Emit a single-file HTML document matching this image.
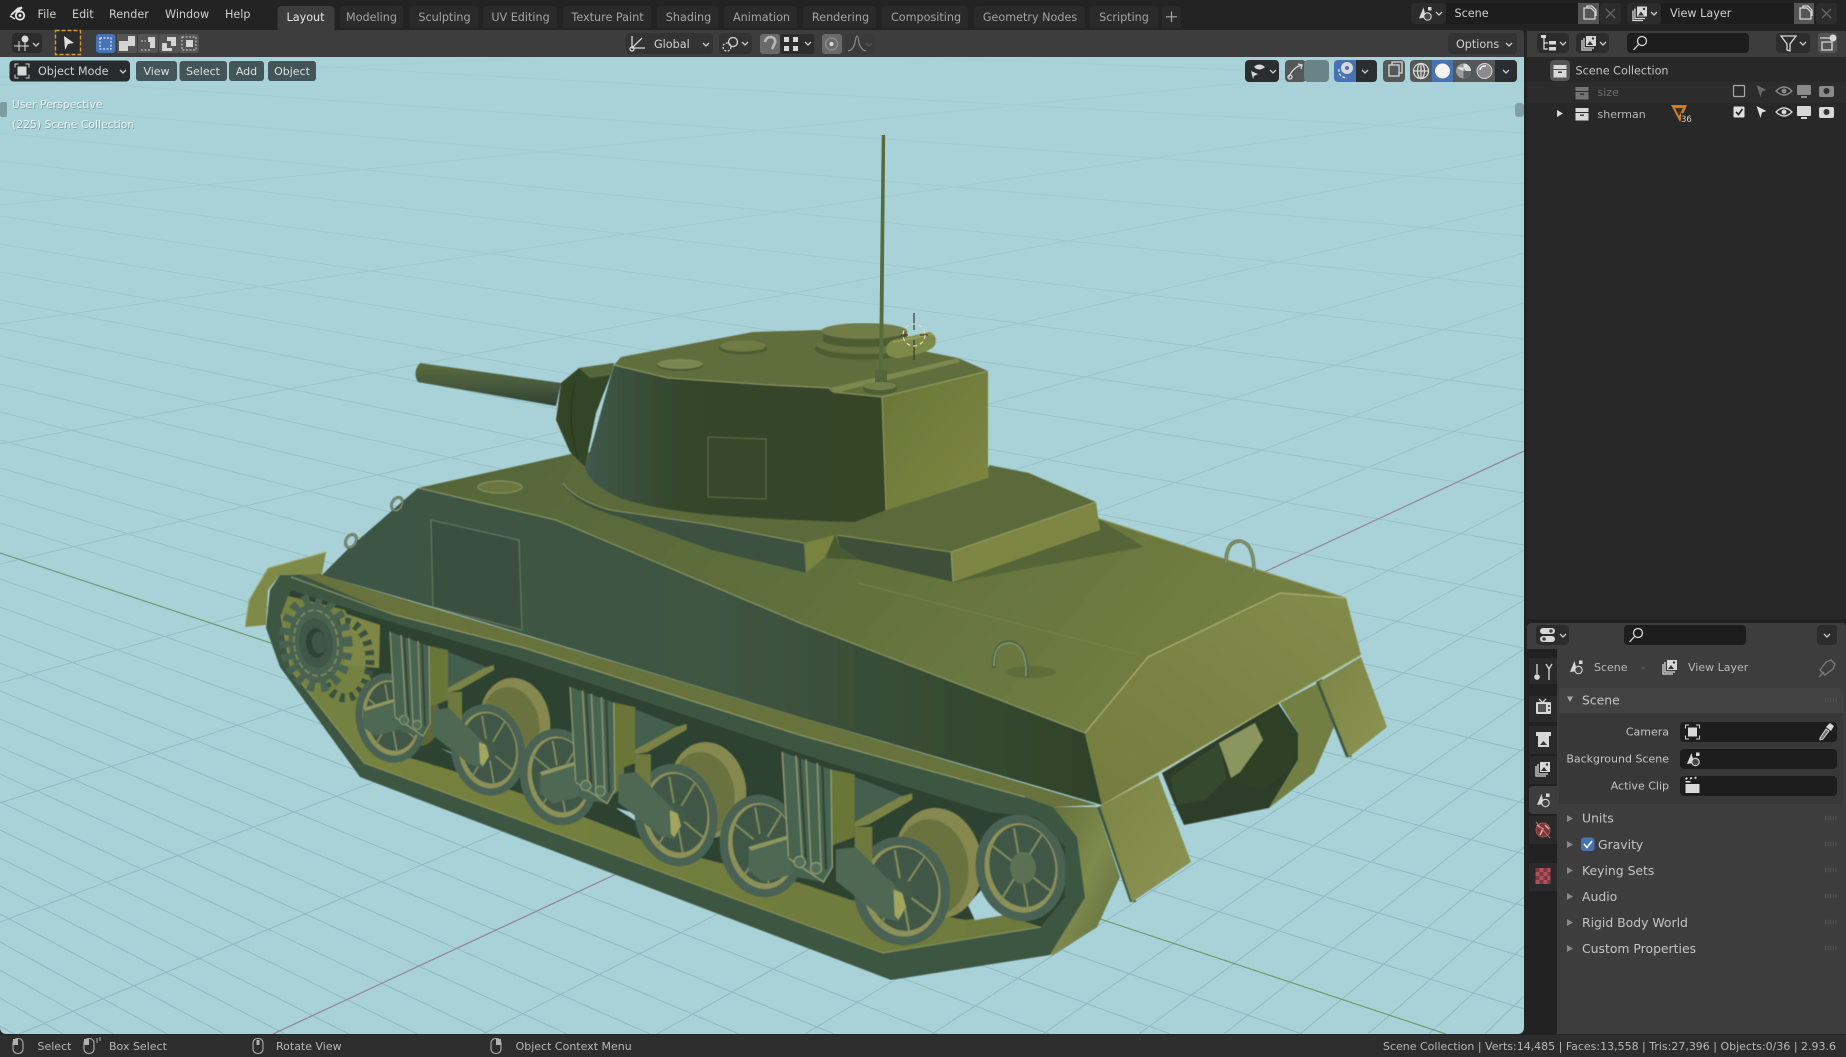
<!DOCTYPE html>
<html><head><meta charset="utf-8"><title>Blender</title>
<style>
html,body{margin:0;padding:0;background:#232323;overflow:hidden;width:1846px;height:1057px}
svg{display:block}
text{font-family:"DejaVu Sans","Liberation Sans",sans-serif;font-size:11px;fill:#b8b8b8}
.m{fill:#d0d0d0;font-size:11.2px}
.t{fill:#a3a3a3;font-size:11.2px;text-anchor:middle}
.h{fill:#c4c4c4;font-size:12.4px}
.l{fill:#c4c4c4;font-size:11px;text-anchor:end}
.b{fill:#d8e0e0;font-size:11px;text-anchor:middle}
.o{fill:#eaf3f3;font-size:10.8px}
.os{fill:#7f9fa4;font-size:10.8px}
.ic{fill:none;stroke:#d8d8d8;stroke-width:1.3}
.f{fill:#d8d8d8}
.ch{fill:none;stroke:#cfcfcf;stroke-width:1.3}
.tl{fill:none;stroke:#aeb47a;stroke-width:1;opacity:.6}
</style></head><body>
<svg width="1846" height="1057" viewBox="0 0 1846 1057" xmlns="http://www.w3.org/2000/svg">
<defs>
<filter id="soft" x="0" y="0" width="1" height="1"><feGaussianBlur stdDeviation=".55"/></filter>
<linearGradient id="gridc" gradientUnits="userSpaceOnUse" x1="0" y1="60" x2="0" y2="800"><stop offset="0" stop-color="#a5ced4"/><stop offset=".4" stop-color="#9bc5cb"/><stop offset="1" stop-color="#8fbac1"/></linearGradient>
<linearGradient id="side" x1="0" y1="0" x2="1" y2="0"><stop offset="0" stop-color="#3d5444"/><stop offset=".5" stop-color="#3f5543"/><stop offset=".85" stop-color="#35492f"/><stop offset="1" stop-color="#2f4229"/></linearGradient>
<linearGradient id="deck" x1="0" y1="0" x2="1" y2=".25"><stop offset="0" stop-color="#546539"/><stop offset=".45" stop-color="#5f6e3c"/><stop offset="1" stop-color="#737f43"/></linearGradient>
<linearGradient id="tur" x1="0" y1="0" x2="1" y2="0"><stop offset="0" stop-color="#40594f"/><stop offset=".1" stop-color="#3c5240"/><stop offset=".32" stop-color="#35462b"/><stop offset="1" stop-color="#344428"/></linearGradient>
<linearGradient id="box" x1="0" y1="0" x2="1" y2="1"><stop offset="0" stop-color="#6a7538"/><stop offset="1" stop-color="#7e8842"/></linearGradient>
<linearGradient id="rear" x1="0" y1="1" x2="1" y2="0"><stop offset="0" stop-color="#747d3f"/><stop offset=".5" stop-color="#7b8445"/><stop offset="1" stop-color="#838c4a"/></linearGradient>
<linearGradient id="fen" x1="0" y1="0" x2="1" y2="1"><stop offset="0" stop-color="#7c8545"/><stop offset="1" stop-color="#8c9454"/></linearGradient>
<linearGradient id="gun" x1="0" y1="0" x2="0" y2="1"><stop offset="0" stop-color="#5b6b3f"/><stop offset=".5" stop-color="#475a3e"/><stop offset="1" stop-color="#2f4030"/></linearGradient>
<linearGradient id="tread" x1="0" y1="0" x2="1" y2="1"><stop offset="0" stop-color="#65703a"/><stop offset=".5" stop-color="#7f8a4d"/><stop offset="1" stop-color="#5a6a3e"/></linearGradient>
<linearGradient id="strip" x1="0" y1="0" x2="1" y2="0"><stop offset="0" stop-color="#76823f"/><stop offset="1" stop-color="#6e7a3d"/></linearGradient>

<g id="w"><ellipse rx="40" ry="50" fill="#4a6252"/><ellipse rx="32" ry="42" fill="#8d9158"/><ellipse cx="1.500" cy="-1.500" rx="29" ry="38.500" fill="#3f5747"/>
<g stroke="#7f8b5c" stroke-width="1.800"><path d="M0-38V38M-24-28L24 28M-24 28L24-28"/></g><ellipse rx="9" ry="12" fill="#435a46"/></g>
<g id="bw"><ellipse rx="38" ry="48" fill="#85884f"/><ellipse cx="-6" cy="3" rx="32" ry="42" fill="#6a7340"/></g>
<g id="br">
<path d="M40 14L59 18V68L40 75Z" fill="#6b7539"/>
<path d="M59 20L105 38L70 58L59 60Z" fill="#455e50"/><path d="M59 60L70 58L105 38L105 33L95 36L59 56Z" fill="#7a8344"/>
<path d="M59 60H73V100H59Z" fill="#6e7a3e"/>
<path d="M44 78L60 76L97 113L100 124L94 136L80 132L44 103Z" fill="#4f6852"/><path d="M90 110L97 113L100 124L94 134L91 131Z" fill="#a0a660"/>
<path d="M-26 76L8 66L16 96L-14 104L-26 95Z" fill="#4e6752"/><path d="M-26 76L8 66L8 69L-24 79Z" fill="#8f9660"/>
<path d="M1 0L40 14L41 92L34 104L12 100L6 84Z" fill="#4a6351"/>
<g stroke="#8c9a72" stroke-width="1.100" fill="none"><path d="M1 0L6 84"/><path d="M12 3L17 87"/><path d="M20 6L24 90"/><path d="M29 9L32 93"/><path d="M40 14L41 92"/><path d="M6 85L34 104L41 92"/></g>
<g stroke="#2f4434" stroke-width="1.800" fill="none"><path d="M15 3L20 87"/><path d="M33 10L36 94"/></g>
<circle cx="15" cy="88" r="4.500" fill="#54705a" stroke="#8c9a72"/><circle cx="28" cy="93" r="4.500" fill="#54705a" stroke="#8c9a72"/>
</g>

<g id="ibox"><rect x="-6.500" y="-6" width="13" height="4" class="f"/><rect x="-6.500" y="-1" width="13" height="7.500" class="f"/><rect x="-2" y="0.500" width="4" height="1.400" fill="#333"/></g>
<g id="isc"><path d="M-6 5L-1.500-6L1 4Z" class="f"/><circle cx="2.500" cy="3" r="3.700" fill="#444" stroke="#d8d8d8" stroke-width="1.100"/><rect x="3" y="-6.500" width="3.500" height="3.500" class="f"/></g>
<g id="ivl"><path d="M-7-3V7H3" class="ic" fill="none"/><path d="M-5-5V5H5" class="ic" fill="none"/><rect x="-3" y="-7" width="10" height="10" class="f"/><path d="M-2 2L1-2L4 2Z" fill="#333"/><circle cx="4" cy="-4.500" r="1.200" fill="#333"/></g>
<g id="iobj"><rect x="-4.500" y="-4.500" width="9" height="9" class="f"/><path d="M-7-3.500V-7H-3.500M3.500-7H7V-3.500M7 3.500V7H3.500M-3.500 7H-7V3.500" fill="none" stroke="#cfcfcf" stroke-width="1"/></g>
<g id="im"><rect x="-5" y="-7.500" width="10" height="15" rx="4.500" fill="none" stroke="#b0b0b0" stroke-width="1.100"/></g>
<path id="arrow" d="M-4.500-6L5.500-1L1 .5L-.5 6Z"/>
<clipPath id="vp"><path d="M0 57H1524V1028a6 6 0 0 1-6 6H6a6 6 0 0 1-6-6Z"/></clipPath>
</defs>

<!-- base -->
<rect width="1846" height="1057" fill="#232323"/>

<!-- viewport -->
<g clip-path="url(#vp)">
<rect x="0" y="57" width="1524" height="977" fill="#a9d2d8"/>
<g stroke="url(#gridc)" stroke-width="1" fill="none">
<path d="M909 57L1524 81M145 57L1524 133M0 77L1524 184M0 105L1524 236M0 133L1524 287M0 161L1524 339M0 189L1524 390M0 216L1524 442M0 244L1524 493M0 272L1524 545M0 300L1524 597M0 328L1524 648M0 356L1524 700M0 384L1524 751M0 412L1524 803M0 440L1524 854M0 468L1524 906M0 495L1524 957M0 523L1524 1009M0 579L1302 1034M0 607L1170 1034M0 635L1049 1034M0 663L937 1034M0 691L834 1034M0 719L739 1034M0 747L650 1034M0 774L567 1034M0 802L489 1034M0 830L417 1034M0 858L349 1034M0 886L285 1034M0 914L224 1034M0 942L167 1034M0 970L113 1034M0 998L63 1034M0 1026L14 1034"/>
<path d="M542 57L0 85M1508 57L0 205M1524 105L0 324M1524 154L0 444M1524 204L0 564M1524 253L0 683M1524 303L0 803M1524 352L0 922M1524 402L19 1034M1524 501L483 1034M1524 550L657 1034M1524 600L805 1034M1524 649L932 1034M1524 699L1043 1034M1524 748L1139 1034M1524 798L1224 1034M1524 847L1300 1034M1524 897L1368 1034M1524 946L1429 1034M1524 996L1485 1034"/>
</g>
<path d="M273 1034L1524 451" stroke="#97899c" stroke-width="1.300" fill="none"/>
<path d="M0 553L1446 1034" stroke="#6f9f78" stroke-width="1.300" fill="none"/>

<g filter="url(#soft)">
<!-- far track / rear interior -->
<path d="M1162 773L1278 703L1298 733L1298 760L1269 808L1184 825L1174 803Z" fill="#2d3e29"/>
<path d="M1280 703L1318 683L1334 727L1314 773L1269 808L1298 760L1298 733Z" fill="#727e43"/>
<path d="M1255 722L1278 706L1298 740L1290 770L1262 790L1231 780L1263 742Z" fill="#2f4028"/>
<path d="M1170 778L1219 743L1227 778L1205 800L1178 805Z" fill="#36482e"/>
<path d="M1219 743L1255 723L1263 740L1240 772L1231 778L1227 765Z" fill="#8b9560"/>

<!-- track silhouette -->
<path d="M266 628L270 590L280 575L320 574L1025 797L1053 807L1077 837L1085 898L1050 955L891 980L360 777L280 667Z" fill="#3e5642"/>
<path d="M1053 807L1097 807L1120 877L1097 927L1053 955L1050 955L1085 898L1077 837Z" fill="url(#tread)"/>
<!-- inner cavity -->
<path d="M291 590L395 623L521 660L830 763L990 812L1037 817L1065 847L1065 897L1041 927L883 953L364 763L291 670L281 615Z" fill="#2f4232"/>
<!-- left olive -->
<path d="M288 596L345 610L362 660L390 720L400 755L450 770L540 800L668 850L800 883L851 900L966 920L1005 915L1041 927L883 953L364 763L291 670L281 615Z" fill="url(#strip)"/>
<path d="M281 615L291 670L364 763L883 953L1041 927" fill="none" stroke="#a6ad6f" stroke-width="1" opacity=".6"/>
<!-- gaps -->
<path d="M440 748L470 762L450 752ZM535 738L560 760L545 752Z" fill="#a9d2d8"/>
<path d="M616 808L650 830L640 815ZM730 800L760 815L745 805Z" fill="#a9d2d8"/>
<path d="M975 920L1005 915L990 880L968 905Z" fill="#a9d2d8"/>
<path d="M340 612L380 625L379 668L345 665Z" fill="#7e8745"/>

<!-- sprocket -->
<ellipse cx="345" cy="660" rx="25" ry="38" fill="none" stroke="#3a5140" stroke-width="9" stroke-dasharray="5 5"/>
<g transform="translate(316 643) rotate(-6)">
<ellipse rx="31" ry="44" fill="none" stroke="#4a6351" stroke-width="11" stroke-dasharray="7 6"/>
<ellipse rx="27" ry="40" fill="#4a6351"/><ellipse rx="22" ry="33" fill="none" stroke="#7f8a58" stroke-width="1.600" stroke-dasharray="6 3"/>
<ellipse rx="17" ry="25" fill="#3f5746"/><ellipse rx="10" ry="15" fill="#2e4232"/><ellipse cx="3" rx="7" ry="11" fill="#3d5645"/>
</g>

<!-- back wheels -->
<use href="#bw" transform="translate(515 722) rotate(-8) scale(.92)"/>
<use href="#bw" transform="translate(708 790) rotate(-8) scale(1)"/>
<use href="#bw" transform="translate(938 863) rotate(-8) scale(1.150)"/>
<ellipse cx="420" cy="718" rx="20" ry="28" fill="#5c6736"/>
<ellipse cx="610" cy="770" rx="14" ry="25" fill="#6a7340"/>
<!-- wheels -->
<use href="#w" transform="translate(391 718) rotate(-10) scale(.88 .9)"/>
<use href="#w" transform="translate(488 750) rotate(-10) scale(.92)"/>
<use href="#w" transform="translate(559 777) rotate(-10) scale(.97)"/>
<use href="#w" transform="translate(676 815) rotate(-10) scale(1.030)"/>
<use href="#w" transform="translate(762 846) rotate(-10) scale(1.050 1.030)"/>
<use href="#w" transform="translate(902 891) rotate(-10) scale(1.200 1.090)"/>
<use href="#w" transform="translate(1021 868) rotate(-10) scale(1.130 1.070)"/>
<ellipse cx="1023" cy="868" rx="13" ry="16" fill="#5b7152"/>

<!-- brackets -->
<use href="#br" transform="translate(389 632)"/>
<use href="#br" transform="translate(569 687) scale(1.120)"/>
<use href="#br" transform="translate(781 752) scale(1.250)"/>

<!-- upper dark band & ledge -->
<path d="M281 579L306 574L1025 797L1053 807L1077 837L1085 898L1065 925L1050 917L1065 897L1065 847L1037 817L990 812L830 763L521 660L395 623L291 590Z" fill="#3e5642"/>
<path d="M295 572L322 575L800 717L1097 805L1053 807L1025 797L800 735L521 647L395 615Z" fill="#67723c"/>
<path d="M291 577L395 615L521 647L800 735L1025 797" fill="none" stroke="#aeb47a" stroke-width="1" opacity=".7"/>
<!-- front fender -->
<path d="M245 627L249 600L268 568L326 552L322 574L280 575L268 590L266 625Z" fill="#7f8a48"/>
<path d="M245 627L249 600L268 568L326 552" fill="none" stroke="#a8ae74" stroke-width="1"/>

<!-- hull side -->
<path d="M322 575L349 548L418 488L556 520L800 623L1085 733L1102 805L800 717L433 607Z" fill="url(#side)"/>
<path d="M431 520L519 540L522 630L433 607Z" fill="#3b5041" stroke="#6f8064" stroke-width=".8"/>

<!-- deck -->
<path d="M418 488L580 452L990 467L1029 473L1097 518L1346 598L1280 593L1148 657L1085 733L800 623L556 520Z" fill="url(#deck)"/>
<path d="M950 583L1128 550L1144 547L1097 518L1100 530Z" fill="#566539"/>
<path d="M858 583L1140 655" stroke="#76824a" stroke-width="1" fill="none"/>
<path class="tl" d="M418 488L556 520L800 623L1085 733"/>
<path d="M1097 518L1346 598" stroke="#8f9761" fill="none"/>
<ellipse cx="500" cy="487" rx="22" ry="6" fill="#6a7540" stroke="#8c9460"/>
<!-- lugs -->
<g fill="none" stroke="#3f5645" stroke-width="2.600"><ellipse cx="351" cy="541" rx="5" ry="7" transform="rotate(30 351 541)"/><ellipse cx="397" cy="504" rx="5" ry="7" transform="rotate(30 397 504)"/></g>
<g fill="none" stroke="#9aa580" stroke-width=".9"><ellipse cx="351" cy="541" rx="5" ry="7" transform="rotate(30 351 541)"/><ellipse cx="397" cy="504" rx="5" ry="7" transform="rotate(30 397 504)"/></g>
<!-- rear plate -->
<path d="M1148 657L1280 593L1346 598L1361 655L1102 805L1085 733Z" fill="url(#rear)"/>
<path d="M1085 733L1148 657L1280 593L1346 598" fill="none" stroke="#a8ae6e" stroke-width="1.200"/>
<path d="M1102 805L1361 655" fill="none" stroke="#a8ae6e" stroke-width="1"/>
<!-- fenders -->
<path d="M1097 807L1103 806L1136 902L1130 902Z" fill="#3d5642"/>
<path d="M1100 806L1158 775L1191 862L1132 902Z" fill="url(#fen)"/>
<path d="M1316 682L1322 679L1352 757L1346 757Z" fill="#3d5642"/>
<path d="M1319 682L1361 657L1387 727L1349 757Z" fill="url(#fen)"/>
<!-- hooks -->
<path d="M1226 563Q1226 541 1240 541Q1254 543 1254 572" fill="none" stroke="#5f7150" stroke-width="3.400"/>
<path d="M1226 563Q1226 541 1240 541Q1254 543 1254 572" fill="none" stroke="#9aa570" stroke-width="1"/>
<ellipse cx="1030" cy="672" rx="26" ry="6" fill="#5f6d3b"/>
<path d="M994 668Q992 642 1010 642Q1028 644 1027 678" fill="none" stroke="#4f6448" stroke-width="3.600"/>
<path d="M994 666Q993 643 1010 643Q1027 645 1026 676" fill="none" stroke="#9aa570" stroke-width="1"/>

<!-- right step -->
<path d="M886 510L989 478L989 465L1029 473L1096 502L951 552L837 535L835 520Z" fill="#5c6b3b"/>
<path d="M837 535L951 552L953 582L860 560L840 547Z" fill="#3e4f38"/>
<path d="M951 552L1096 502L1100 530L953 582Z" fill="#7c8642"/>
<path class="tl" d="M837 535L951 552L1096 502M951 552L953 582"/>
<!-- ring -->
<path d="M563 483L578 452L886 510L837 535L804 543L712 525L610 510Z" fill="#5b6a3b"/>
<path d="M563 483Q575 500 610 510L712 525L804 543L806 573L712 550L623 518Q572 505 563 483Z" fill="#3e5140"/>
<path class="tl" d="M563 483Q575 500 610 510L712 525L804 543"/>
<path d="M804 543L835 535L824 558L806 573Z" fill="#78833f"/>
<path d="M835 535L840 547L860 560L826 558Z" fill="#4a5a33"/>

<!-- gun -->
<path d="M420 363L561 383L556 406L418 382Q412 372 420 363Z" fill="url(#gun)"/>
<path d="M579 368L614 363L610 377L596 413L585 467L570 452L556 420L561 383Z" fill="#334428"/>
<path d="M579 368L614 363L611 375L590 378Z" fill="#57653a"/>
<path d="M575 382Q566 420 578 458" fill="none" stroke="#27351f" stroke-width="1"/>
<!-- turret -->
<path d="M614 365L668 378L770 385L829 388L833 392L882 397L886 510L855 522Q800 521 740 517Q660 512 620 498Q590 485 585 468L594 437L605 397Z" fill="url(#tur)"/>
<path d="M708 437L766 439L766 499L708 497Z" fill="#37472b" stroke="#5f6c42" stroke-width="1"/>
<path d="M614 365L621 357L753 332L820 330L958 358L988 371L882 397L833 392L829 388L770 385L668 378Z" fill="#606e3c"/>
<path class="tl" d="M614 365L668 378L770 385L829 388L833 392L882 397"/>
<path d="M882 397L988 371L988 478L886 510Z" fill="url(#box)"/>
<path class="tl" d="M882 397L988 371M882 397L886 510"/>
<path d="M831 388L958 358L960 362L835 393Z" fill="#7e8950"/>
<ellipse cx="743" cy="348" rx="24" ry="6.500" fill="#4d5a31"/><ellipse cx="743" cy="346" rx="23" ry="5.500" fill="#6f7a45"/>
<ellipse cx="680" cy="366" rx="23" ry="5" fill="#4f5c33"/><ellipse cx="680" cy="364" rx="22" ry="4.400" fill="#7a8550" stroke="#8f9766" stroke-width=".6"/>
<!-- cupola -->
<ellipse cx="864" cy="349" rx="49" ry="11" fill="#4f5d33"/><ellipse cx="864" cy="345" rx="47" ry="9" fill="#66723f"/>
<rect x="823" y="331" width="84" height="10" fill="#4d5b32"/><ellipse cx="864" cy="340" rx="42" ry="7" fill="#4d5b32"/><ellipse cx="864" cy="331" rx="43" ry="8" fill="#717c47"/>
<path d="M893 340L930 332Q938 336 935 345Q932 352 900 358Q886 358 886 350Q886 343 893 340Z" fill="#7e8a47"/>
<path d="M893 342L933 334" stroke="#a5ab6f" fill="none"/>
</g>
<!-- 3D cursor -->
<g fill="none" stroke-width="1.200"><path d="M914 313V330M914 340V360" stroke="#3a3a3a"/><path d="M901 335H908M920 335H928" stroke="#7a2c20"/><circle cx="914" cy="335" r="11" stroke="#e8d8c8" stroke-dasharray="4 3"/></g>
<!-- antenna -->
<path d="M881.700 135H885.200L883 372H879Z" fill="#596a3d"/>
<rect x="875" y="370" width="12" height="14" fill="#56663a"/>
<ellipse cx="880" cy="389" rx="17" ry="5.500" fill="#4e5f35"/><ellipse cx="880" cy="386" rx="16" ry="4" fill="#727e4a"/>

<!-- viewport header buttons -->
<rect x="9.500" y="60.500" width="120.500" height="21" rx="4" fill="#272b2d"/>
<use href="#iobj" x="22" y="71"/>
<text x="38" y="75" class="m" style="fill:#cfd4d4">Object Mode</text>
<path d="M120 70L123 73L126 70" class="ch"/>
<rect x="136" y="61" width="41" height="20" rx="3" fill="#435558"/><text x="156.500" y="75" class="b">View</text>
<rect x="179.500" y="61" width="47.500" height="20" rx="3" fill="#435558"/><text x="203" y="75" class="b">Select</text>
<rect x="229" y="61" width="35" height="20" rx="3" fill="#435558"/><text x="246.500" y="75" class="b">Add</text>
<rect x="268" y="61" width="48" height="20" rx="3" fill="#435558"/><text x="292" y="75" class="b">Object</text>
<text x="12.800" y="108.800" class="os">User Perspective</text><text x="12" y="108" class="o">User Perspective</text>
<text x="12.800" y="128.800" class="os">(225) Scene Collection</text><text x="12" y="128" class="o">(225) Scene Collection</text>
<rect x="0" y="102" width="7" height="15" rx="2" fill="#7e9ca1"/>
<rect x="1515" y="103" width="9" height="14" rx="3" fill="#7fa0a6"/>

<!-- right header cluster -->
<rect x="1245" y="60" width="34" height="22" rx="4" fill="#2b2e30"/>
<path d="M1254 67Q1259 62 1265 67Q1259 72 1254 67Z" class="f"/><path d="M1251 71L1258 74L1254 76L1253 79Z" class="f"/><path d="M1270 70L1273 73L1276 70" class="ch"/>
<rect x="1285" y="60" width="21" height="22" rx="4" fill="#545858"/><rect x="1304" y="60" width="25" height="22" rx="4" fill="#6a8386"/>
<path d="M1289 77Q1293 67 1302 65M1298 64L1302 65L1301 69" class="ic"/><circle cx="1290" cy="77" r="2" class="ic"/>
<rect x="1334" y="60" width="22" height="22" rx="4" fill="#4772b3"/>
<rect x="1352" y="60" width="25" height="22" rx="4" fill="#2b2e30"/>
<rect x="1352" y="60" width="4" height="22" fill="#4772b3"/>
<circle cx="1347" cy="68" r="6" class="f"/><circle cx="1347" cy="68" r="2" fill="#4772b3"/><path d="M1339 69Q1338 77 1347 78" fill="none" stroke="#cfe0f0" stroke-width="1.400" stroke-dasharray="3 1.500"/>
<path d="M1362 70L1365 73L1368 70" class="ch"/>
<rect x="1383" y="60" width="22" height="22" rx="4" fill="#545858"/>
<rect x="1389" y="65" width="10" height="11" class="ic"/><path d="M1392 65V62H1402V73H1399" class="ic"/>
<rect x="1410" y="60" width="107" height="22" rx="4" fill="#545858"/>
<rect x="1432" y="60" width="21" height="22" fill="#4772b3"/>
<rect x="1495" y="60" width="22" height="22" rx="4" fill="#2b2e30"/><rect x="1495" y="60" width="6" height="22" fill="#2b2e30"/>
<circle cx="1421" cy="71" r="7.500" class="ic"/><path d="M1413.500 71H1428.500M1421 63.500V78.500" class="ic" stroke-width=".9"/><ellipse cx="1421" cy="71" rx="3.500" ry="7.500" class="ic" stroke-width=".9"/>
<circle cx="1442.500" cy="71" r="7.500" fill="#f4f4f4"/>
<circle cx="1463.500" cy="71" r="7.500" fill="#9c9c9c"/><path d="M1463.500 71V63.500A7.500 7.500 0 0 1 1463.500 78.500A5 5 0 0 0 1457 68Z" fill="#e0e0e0"/><path d="M1463.500 71H1471A7.500 7.500 0 0 1 1463.500 78.500Z" fill="#606060"/>
<circle cx="1484.500" cy="71" r="7.500" fill="#8b8b8b" stroke="#d8d8d8"/><path d="M1480 70A5 5 0 0 1 1486 66" fill="none" stroke="#fff" stroke-width="1.400"/>
<path d="M1503 70L1506 73L1509 70" class="ch"/>
</g>

<!-- topbar -->
<rect x="0" y="0" width="1846" height="30" fill="#232323"/>
<g transform="translate(18 14)"><path d="M-7 1L0-5.500L4-6.500L-1-2.500H3.500" fill="none" stroke="#e6e6e6" stroke-width="1.800"/><circle cx="2" cy="1.500" r="4.200" fill="none" stroke="#e6e6e6" stroke-width="1.800"/><circle cx="2" cy="1.500" r="1.500" fill="#e6e6e6"/><path d="M-8 2L-3 5" stroke="#e6e6e6" stroke-width="1.400"/></g>
<text x="37.500" y="18" class="m">File</text><text x="72" y="18" class="m">Edit</text><text x="109" y="18" class="m">Render</text><text x="165" y="18" class="m">Window</text><text x="225" y="18" class="m">Help</text>
<g fill="#2a2a2a">
<path d="M340 10a4 4 0 0 1 4-4h55a4 4 0 0 1 4 4v18h-63zM410 10a4 4 0 0 1 4-4h60a4 4 0 0 1 4 4v18h-68zM483 10a4 4 0 0 1 4-4h66a4 4 0 0 1 4 4v18h-74zM563 10a4 4 0 0 1 4-4h80a4 4 0 0 1 4 4v18h-88zM657 10a4 4 0 0 1 4-4h53a4 4 0 0 1 4 4v18h-61zM724 10a4 4 0 0 1 4-4h65a4 4 0 0 1 4 4v18h-73zM803 10a4 4 0 0 1 4-4h65a4 4 0 0 1 4 4v18h-73zM882 10a4 4 0 0 1 4-4h78a4 4 0 0 1 4 4v18h-86zM974 10a4 4 0 0 1 4-4h103a4 4 0 0 1 4 4v18h-111zM1090 10a4 4 0 0 1 4-4h60a4 4 0 0 1 4 4v18h-68zM1162 10a4 4 0 0 1 4-4h11a4 4 0 0 1 4 4v18h-19z"/>
</g>
<path d="M277.500 10a4 4 0 0 1 4-4h49a4 4 0 0 1 4 4v20h-57z" fill="#3d3d3d"/>
<text x="305.500" y="21" class="t" style="fill:#e6e6e6">Layout</text>
<text x="371.500" y="21" class="t">Modeling</text><text x="444.500" y="21" class="t">Sculpting</text><text x="520.500" y="21" class="t">UV Editing</text><text x="607.500" y="21" class="t">Texture Paint</text><text x="688.500" y="21" class="t">Shading</text><text x="761.500" y="21" class="t">Animation</text><text x="840.500" y="21" class="t">Rendering</text><text x="926" y="21" class="t">Compositing</text><text x="1030" y="21" class="t">Geometry Nodes</text><text x="1124" y="21" class="t">Scripting</text>
<path d="M1171.500 11.500V22M1166 16.800H1177" stroke="#a8a8a8" stroke-width="1.200"/>

<!-- scene selector -->
<rect x="1411" y="3" width="35" height="21" rx="4" fill="#2c2c2c"/>
<use href="#isc" x="1425" y="13.500"/><path d="M1436 12L1439 15L1442 12" class="ch"/>
<rect x="1446" y="3" width="133" height="21" fill="#1d1d1d"/>
<text x="1454.500" y="17" class="m">Scene</text>
<rect x="1578" y="3" width="21" height="21" fill="#555"/>
<path d="M1584 8V19H1595V12L1591 8Z M1587 8V6H1592L1596 10V16" class="ic"/>
<rect x="1600" y="3" width="21" height="21" rx="3" fill="#2c2c2c"/><path d="M1606 9L1615 18M1615 9L1606 18" stroke="#666" stroke-width="1.300"/>
<rect x="1627" y="3" width="34" height="21" rx="4" fill="#2c2c2c"/>
<use href="#ivl" x="1640" y="13.500"/><path d="M1651 12L1654 15L1657 12" class="ch"/>
<rect x="1661" y="3" width="133" height="21" fill="#1d1d1d"/>
<text x="1670" y="17" class="m">View Layer</text>
<rect x="1794" y="3" width="20" height="21" fill="#555"/>
<path d="M1800 8V19H1811V12L1807 8Z M1803 8V6H1808L1812 10V16" class="ic"/>
<rect x="1816" y="3" width="21" height="21" rx="3" fill="#2c2c2c"/><path d="M1822 9L1831 18M1831 9L1822 18" stroke="#666" stroke-width="1.300"/>

<!-- tool header -->
<path d="M0 30H1520a4 4 0 0 1 4 4V57H0Z" fill="#3d3d3d"/>
<rect x="12" y="33" width="30" height="20" rx="4" fill="#2c2c2c"/>
<path d="M14 46H29M19 41V51M25 41V51" stroke="#ddd" stroke-width="1"/><circle cx="25" cy="39" r="3.500" class="f"/><path d="M33 43L36 46L39 43" class="ch"/>
<rect x="55.500" y="30.500" width="25" height="24" fill="#2c2c2c" stroke="#d79a33" stroke-width="1.400" stroke-dasharray="4 2"/>
<path d="M64 36L74 43L68 44L65 50Z" fill="#e0e0e0"/>
<rect x="96" y="34" width="19.500" height="19" rx="3" fill="#4772b3"/><rect x="100" y="38" width="11" height="11" fill="#4772b3" stroke="#dfe8f5" stroke-width="1.200" stroke-dasharray="2 1.500"/>
<rect x="117" y="34" width="20" height="19" rx="2" fill="#545454"/><path d="M128 36H135V46H128V51H119V41H128Z" fill="#d4d4d4"/>
<rect x="138" y="34" width="20" height="19" rx="2" fill="#545454"/><path d="M148 37H155V48H150V42H148Z" fill="#d4d4d4"/><path d="M141 41H146M141 50H150" stroke="#bbb" stroke-dasharray="2 1.500" stroke-width="1.200"/>
<rect x="159" y="34" width="20" height="19" rx="2" fill="#545454"/><path d="M167 37H176V46H171V41H167ZM162 43H167V48H172V51H162Z" fill="#d4d4d4"/>
<rect x="179" y="34" width="20" height="19" rx="2" fill="#545454"/><rect x="186" y="40" width="7" height="7" fill="#d4d4d4"/><rect x="182" y="37" width="14" height="13" fill="none" stroke="#bbb" stroke-dasharray="2 1.500" stroke-width="1.200"/>

<rect x="625.500" y="33" width="87.500" height="21" rx="4" fill="#333"/>
<path d="M632 36V48H645M632 48L642 38" class="ic"/><circle cx="632" cy="49" r="2" class="ic"/>
<text x="654" y="48" class="m">Global</text><path d="M703 43L706 46L709 43" class="ch"/>
<rect x="719" y="33" width="33" height="21" rx="4" fill="#333"/>
<circle cx="733" cy="42" r="4.500" class="ic"/><circle cx="727" cy="47" r="4" class="ic" stroke-dasharray="2 1.500"/><path d="M742 42L745 45L748 42" class="ch"/>
<rect x="760" y="34" width="20" height="20" rx="3" fill="#6a6a6a"/>
<path d="M765 42Q766 37 771 37Q776 38 775 43L772 49" fill="none" stroke="#b8b8b8" stroke-width="2.600"/>
<rect x="780" y="34" width="34" height="20" rx="3" fill="#2c2c2c"/>
<rect x="784" y="37" width="5" height="5" class="f"/><rect x="793" y="37" width="5" height="5" class="f"/><rect x="784" y="46" width="5" height="5" class="f"/><rect x="793" y="46" width="5" height="5" class="f"/><path d="M805 42L808 45L811 42" class="ch"/>
<rect x="822" y="34" width="20" height="20" rx="3" fill="#6a6a6a"/>
<circle cx="831.500" cy="44" r="6" fill="none" stroke="#8a8a8a" stroke-width="1.500"/><circle cx="831.500" cy="44" r="2" fill="#ddd"/>
<rect x="845" y="34" width="30" height="20" rx="3" fill="#3a3a3a"/>
<path d="M848 51Q854 50 855.500 40Q856 36 857 36Q858 36 858.500 40Q860 50 866 51" fill="none" stroke="#909090" stroke-width="1.100"/><path d="M866 43L869 46L872 43" stroke="#5a5a5a" fill="none"/>
<rect x="1448" y="33" width="69" height="21" rx="4" fill="#333"/>
<text x="1456" y="48" class="m">Options</text><path d="M1506 43L1509 46L1512 43" class="ch"/>

<!-- outliner -->
<rect x="1527" y="31" width="319" height="27" fill="#3d3d3d"/>
<rect x="1527" y="57" width="319" height="562" fill="#282828"/>
<rect x="1527" y="82" width="319" height="21" fill="#2c2c2c"/>
<rect x="1537" y="33" width="32" height="20" rx="4" fill="#2c2c2c"/>
<path d="M1544 37V49H1548M1544 43H1548" class="ic" stroke-width="1"/><rect x="1541" y="35" width="5" height="3" class="f"/><rect x="1549" y="41" width="7" height="3.500" class="f"/><rect x="1549" y="47" width="7" height="3.500" class="f"/><path d="M1560 42L1563 45L1566 42" class="ch"/>
<rect x="1576" y="33" width="33" height="20" rx="4" fill="#2c2c2c"/><use href="#ivl" x="1589" y="43"/><path d="M1600 42L1603 45L1606 42" class="ch"/>
<rect x="1627" y="33" width="122" height="20" rx="4" fill="#1d1d1d"/>
<circle cx="1642" cy="41" r="4.500" class="ic"/><path d="M1638.500 44.500L1633.500 50" class="ic"/>
<rect x="1776" y="33" width="34" height="20" rx="4" fill="#2c2c2c"/>
<path d="M1781 36H1796L1790 44V51L1787 50V44Z" class="ic"/><path d="M1800 42L1803 45L1806 42" class="ch"/>
<rect x="1818" y="33" width="19" height="20" rx="3" fill="#545454"/>
<path d="M1820 38H1832M1822 42V50H1832V42Z" class="ic" stroke-width="1"/><circle cx="1833" cy="38" r="3.500" class="f"/>
<rect x="1550" y="60" width="20" height="21" rx="4" fill="#545454"/>
<use href="#ibox" x="1560" y="71"/><text x="1575.500" y="74.500" class="m" style="fill:#c4c4c4">Scene Collection</text>
<g opacity=".42"><use href="#ibox" x="1582" y="93"/></g><text x="1597.500" y="96" style="fill:#6f6f6f">size</text>
<path d="M1557 110L1563 113.500L1557 117Z" class="f"/>
<use href="#ibox" x="1582" y="114"/><text x="1597.500" y="118" style="fill:#b6b6b6">sherman</text>
<path d="M1671 105H1687L1680 122Z" fill="#c87e33"/><path d="M1675 108H1683L1679 116Z" fill="#3a3022"/><rect x="1681" y="113" width="12" height="10" fill="#282828"/><text x="1681" y="122" style="font-size:8.500px;fill:#d0d0d0">36</text>
<rect x="1733.500" y="85.500" width="11" height="11" rx="1" fill="none" stroke="#a8a8a8" stroke-width="1.200"/>
<use href="#arrow" x="1761" y="91" fill="#6a6a6a"/>
<g opacity=".55"><path d="M1776 91Q1784 83 1792 91Q1784 99 1776 91Z" class="ic"/><circle cx="1784" cy="91" r="2.500" class="f"/><rect x="1797" y="85" width="14" height="10" class="f" rx="1"/><rect x="1801" y="96" width="6" height="2" class="f"/><rect x="1819" y="86" width="15" height="11" rx="2" class="f"/><circle cx="1826.500" cy="91" r="3" fill="#333"/></g>
<rect x="1733.500" y="106.500" width="11" height="11" rx="1" fill="#e0e0e0"/><path d="M1736 112L1738.500 114.500L1742.500 109" fill="none" stroke="#222" stroke-width="1.600"/>
<use href="#arrow" x="1761" y="112" fill="#e0e0e0"/>
<path d="M1776 112Q1784 104 1792 112Q1784 120 1776 112Z" class="ic"/><circle cx="1784" cy="112" r="2.500" class="f"/><rect x="1797" y="106" width="14" height="10" class="f" rx="1"/><rect x="1801" y="117" width="6" height="2" class="f"/><rect x="1819" y="107" width="15" height="11" rx="2" class="f"/><circle cx="1826.500" cy="112" r="3" fill="#333"/>

<!-- properties -->
<path d="M1527 627a4 4 0 0 1 4-4H1842a4 4 0 0 1 4 4V1034H1527Z" fill="#3d3d3d"/>
<rect x="1527" y="649" width="30" height="385" fill="#212121"/>
<rect x="1536" y="625" width="33" height="20" rx="4" fill="#2c2c2c"/>
<rect x="1540" y="628" width="15" height="6" rx="3" class="f"/><rect x="1540" y="636" width="15" height="6" rx="3" class="f"/><circle cx="1551" cy="631" r="1.800" fill="#444"/><circle cx="1544" cy="639" r="1.800" fill="#444"/><path d="M1560 634L1563 637L1566 634" class="ch"/>
<rect x="1624" y="625" width="122" height="20" rx="4" fill="#1d1d1d"/>
<circle cx="1638" cy="633" r="4.500" class="ic"/><path d="M1634.500 636.500L1629.500 642" class="ic"/>
<rect x="1817" y="625" width="20" height="20" rx="4" fill="#2c2c2c"/><path d="M1824 634L1827 637L1830 634" class="ch"/>
<rect x="1529" y="658" width="28" height="26" fill="#2a2a2a"/>
<rect x="1529" y="696" width="28" height="26" fill="#2a2a2a"/><rect x="1529" y="726" width="28" height="28" fill="#2a2a2a"/><rect x="1529" y="756" width="28" height="28" fill="#2a2a2a"/>
<path d="M1529 790a4 4 0 0 1 4-4h24v28h-24a4 4 0 0 1-4-4z" fill="#3d3d3d"/>
<rect x="1529" y="816" width="28" height="28" fill="#2a2a2a"/><rect x="1529" y="863" width="28" height="28" fill="#2a2a2a"/>
<path d="M1537 664V674M1546 664L1549 669V680M1552 664L1549 669" class="ic" stroke-width="1.800"/><circle cx="1537" cy="677" r="2.800" class="f"/>
<rect x="1536" y="702" width="15" height="12" rx="1" class="f"/><rect x="1538" y="704" width="8" height="8" fill="#555"/><circle cx="1549" cy="706" r="1" fill="#333"/><circle cx="1549" cy="710" r="1" fill="#333"/><path d="M1539 699L1542 702M1546 699L1543 702" class="ic" stroke-width="1"/>
<rect x="1536" y="732" width="15" height="4" class="f"/><rect x="1538" y="736" width="11" height="11" class="f"/><path d="M1540 745L1543.500 741L1547 745Z" fill="#333"/>
<use href="#ivl" x="1543" y="769"/>
<use href="#isc" x="1543" y="800"/>
<circle cx="1543" cy="830" r="7" fill="#7a3838" stroke="#a85050" stroke-width="1"/><path d="M1537 825L1543 829L1540 835M1545 825L1549 829" stroke="#e0b0b0" stroke-width="1.500" fill="none"/><path d="M1536 822L1550 838" stroke="#b96a6a" stroke-width="1"/>
<rect x="1535.500" y="868" width="15" height="16" fill="#b84e5c"/>
<path d="M1535.500 868h4v4h-4zM1543.500 868h4v4h-4zM1539.500 872h4v4h-4zM1547.500 872h3v4h-3zM1535.500 876h4v4h-4zM1543.500 876h4v4h-4zM1539.500 880h4v4h-4zM1547.500 880h3v4h-3z" fill="#7a3c44"/>

<use href="#isc" x="1576" y="667"/><text x="1594" y="671">Scene</text>
<circle cx="1643" cy="668" r="1.500" fill="#555"/>
<use href="#ivl" x="1670" y="667"/><text x="1688" y="671">View Layer</text>
<g fill="none" stroke="#7a7a7a" stroke-width="1.300"><path d="M1820 670L1826 662L1831 660L1835 664L1833 669L1825 675ZM1824 672L1819 677"/></g>

<path d="M1559 692a4 4 0 0 1 4-4H1839a4 4 0 0 1 4 4V713H1559Z" fill="#424242"/>
<rect x="1559" y="713" width="284" height="91" fill="#383838"/>
<path d="M1567 696.500H1573L1570 702Z" fill="#a8a8a8"/>
<text x="1582" y="704.500" class="h">Scene</text>
<text x="1669" y="735.500" class="l">Camera</text>
<text x="1669" y="762.500" class="l">Background Scene</text>
<text x="1669" y="789.500" class="l">Active Clip</text>
<rect x="1680" y="722" width="157" height="20" rx="4" fill="#1d1d1d"/>
<rect x="1680" y="749" width="157" height="20" rx="4" fill="#1d1d1d"/>
<rect x="1680" y="776" width="157" height="20" rx="4" fill="#1d1d1d"/>
<use href="#iobj" x="1692.500" y="732"/>
<path d="M1820 738L1826 729L1829 731L1823 739L1820 740Z" fill="#777" stroke="#ddd" stroke-width=".9"/><path d="M1826 727L1830 723L1834 726L1831 731Z" class="f"/>
<use href="#isc" x="1693" y="759"/>
<rect x="1685.500" y="784" width="14" height="9" class="f"/><path d="M1685.500 779L1687.500 778M1690 778.500L1692 778M1694.500 778L1696.500 777.500" stroke="#ddd" stroke-width="1.800"/><rect x="1685.500" y="781" width="5" height="1.500" class="f"/>

<g fill="#888"><path d="M1567 815L1573 818.500L1567 822ZM1567 841L1573 844.500L1567 848ZM1567 867L1573 870.500L1567 874ZM1567 893L1573 896.500L1567 900ZM1567 919L1573 922.500L1567 926ZM1567 945L1573 948.500L1567 952Z"/></g>
<text x="1582" y="822.500" class="h">Units</text>
<rect x="1581" y="837.500" width="13.500" height="13.500" rx="3" fill="#4772b3"/><path d="M1584 844L1587 847.500L1592 841" fill="none" stroke="#fff" stroke-width="1.500"/>
<text x="1598" y="849" class="h">Gravity</text>
<text x="1582" y="875" class="h">Keying Sets</text>
<text x="1582" y="901" class="h">Audio</text>
<text x="1582" y="927" class="h">Rigid Body World</text>
<text x="1582" y="953" class="h">Custom Properties</text>
<g stroke="#555" stroke-width="4.500" stroke-dasharray="1 1.600" fill="none"><path d="M1825 700H1837M1825 818H1837M1825 844H1837M1825 870H1837M1825 896H1837M1825 922H1837M1825 948H1837"/></g>

<!-- status bar -->
<rect x="0" y="1035" width="1846" height="22" fill="#2d2d2d"/>
<use href="#im" x="18" y="1046"/><rect x="13" y="1039" width="5" height="6" fill="#b0b0b0"/>
<text x="37.500" y="1050">Select</text>
<use href="#im" x="89" y="1046"/><rect x="84" y="1039" width="5" height="6" fill="#b0b0b0"/><path d="M97 1038V1043M100 1037V1041" stroke="#b0b0b0"/>
<text x="109" y="1050">Box Select</text>
<use href="#im" x="258" y="1046"/><rect x="256.500" y="1040" width="3" height="5" fill="#b0b0b0"/>
<text x="276" y="1050">Rotate View</text>
<use href="#im" x="496" y="1046"/><rect x="496" y="1039" width="5" height="6" fill="#b0b0b0"/>
<text x="515.600" y="1050">Object Context Menu</text>
<text x="1836" y="1050" text-anchor="end" textLength="453" lengthAdjust="spacingAndGlyphs">Scene Collection | Verts:14,485 | Faces:13,558 | Tris:27,396 | Objects:0/36 | 2.93.6</text>
</svg>
</body></html>
